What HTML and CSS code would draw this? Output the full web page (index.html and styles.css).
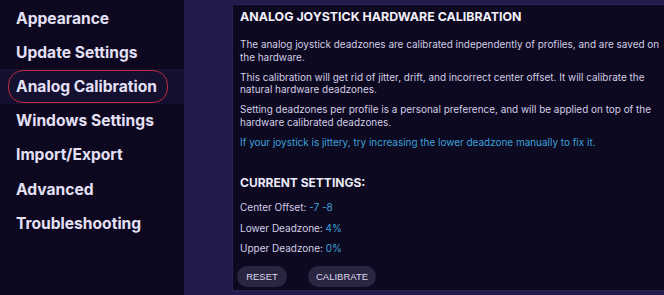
FILE: index.html
```html
<!DOCTYPE html>
<html>
<head>
<meta charset="utf-8">
<link rel="stylesheet" href="styles.css">
</head>
<body>
<div class="app">
  <nav class="sidebar">
    <div class="nav-item">Appearance</div>
    <div class="nav-item">Update Settings</div>
    <div class="nav-item active"><span class="ring">Analog Calibration</span></div>
    <div class="nav-item">Windows Settings</div>
    <div class="nav-item">Import/Export</div>
    <div class="nav-item">Advanced</div>
    <div class="nav-item">Troubleshooting</div>
  </nav>
  <main class="main">
    <section class="card">
      <h1 class="title">ANALOG JOYSTICK HARDWARE CALIBRATION</h1>
      <p class="para">The analog joystick deadzones are calibrated independently of profiles, and are saved on the hardware.</p>
      <p class="para">This calibration will get rid of jitter, drift, and incorrect center offset. It will calibrate the natural hardware deadzones.</p>
      <p class="para">Setting deadzones per profile is a personal preference, and will be applied on top of the hardware calibrated deadzones.</p>
      <p class="para hint">If your joystick is jittery, try increasing the lower deadzone manually to fix it.</p>
      <h2 class="subtitle">CURRENT SETTINGS:</h2>
      <div class="setting">Center Offset: <span class="val">-7 -8</span></div>
      <div class="setting">Lower Deadzone: <span class="val">4%</span></div>
      <div class="setting">Upper Deadzone: <span class="val">0%</span></div>
      <div class="buttons">
        <button class="btn">RESET</button>
        <button class="btn">CALIBRATE</button>
      </div>
    </section>
  </main>
</div>
</body>
</html>
```
FILE: styles.css
```css
html, body {
  margin: 0;
  padding: 0;
  background: #221b4b;
  font-family: Inter, "Noto Sans", sans-serif;
}
.app {
  display: flex;
  width: 664px;
  height: 295px;
  overflow: hidden;
}
.sidebar {
  width: 184px;
  flex: none;
  background: #0d0820;
  padding-top: 1px;
  box-sizing: border-box;
}
.nav-item {
  height: 34.2px;
  display: flex;
  align-items: center;
  padding-left: 16px;
  font-size: 15.6px;
  font-weight: 700;
  color: #e4e0f6;
}
.nav-item.active {
  background: #15102f;
}
.ring {
  margin-left: -8px;
  padding: 6px 10px 6px 7px;
  border: 1.5px solid #c0283e;
  border-radius: 15px;
}
.main {
  flex: 1;
  background: #221b4b;
  padding: 4px 0 4px 48px;
  display: flex;
}
.card {
  flex: 1;
  background: #0d0920;
  border: 1px solid #2a2352;
  border-right: none;
  padding: 4px 0 0 7px;
  color: #d8d4ea;
}
.title {
  margin: 0 0 13px;
  font-size: 12.4px;
  font-weight: 700;
  color: #f2f0fa;
  line-height: 16px;
}
.para {
  margin: 0 0 7.5px;
  font-size: 9.95px;
  line-height: 12.5px;
  color: #d2cee6;
}
.hint {
  color: #3da2dc;
}
.subtitle {
  margin: 27px 0 6px;
  font-size: 12px;
  font-weight: 700;
  color: #eceaf8;
  line-height: 16px;
}
.setting {
  font-size: 10px;
  line-height: 20.5px;
  color: #d2cee6;
}
.val {
  color: #3da2dc;
}
.buttons {
  display: flex;
  gap: 21px;
  margin-top: 7px;
  margin-left: -3px;
}
.btn {
  background: #2a2540;
  color: #dcd8ee;
  border: none;
  border-radius: 11px;
  font-family: "Liberation Sans", Arial, sans-serif;
  font-size: 9.5px;
  height: 21px;
  min-width: 50px;
  padding: 0 8px;
}
```
